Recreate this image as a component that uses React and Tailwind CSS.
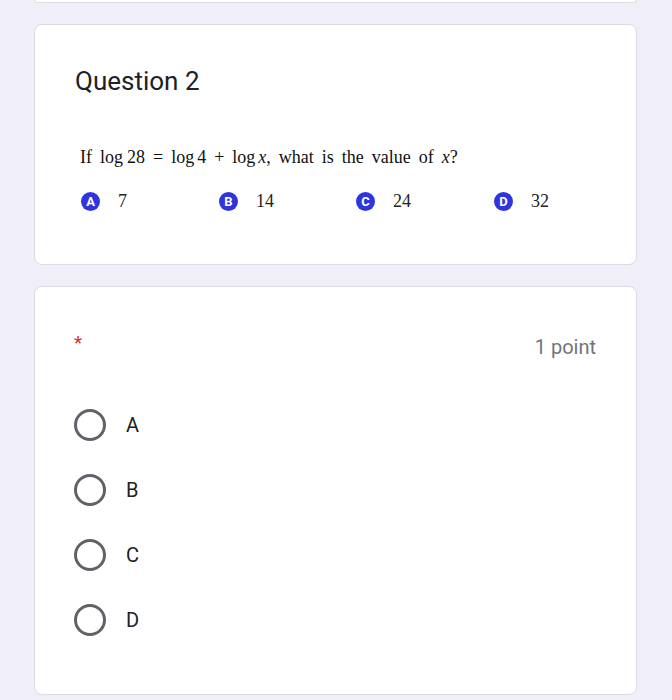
import { Fragment } from 'react';

const OPTIONS = [
  { letter: 'A', value: '7' },
  { letter: 'B', value: '14' },
  { letter: 'C', value: '24' },
  { letter: 'D', value: '32' },
];

const Badge = ({ letter }) => (
  <span className="flex h-[19px] w-[19px] items-center justify-center rounded-full bg-[#2f35de] text-[13px] font-bold leading-none text-white [font-family:Roboto,sans-serif]">
    {letter}
  </span>
);

const Radio = ({ label }) => (
  <div className="flex items-center gap-5">
    <span className="h-8 w-8 rounded-full border-[3px] border-[#5f6368]" />
    <span className="text-[20px] text-[#202124]">{label}</span>
  </div>
);

export default function App() {
  return (
    <div className="min-h-[700px] bg-[#f0eef9] pb-6 [font-family:Roboto,'Liberation_Sans',sans-serif]">
      {/* end of the previous card */}
      <div className="mx-[34px] mr-[35px] h-[3px] rounded-b-lg border-x border-b border-[#dadce0] bg-white" />

      {/* Question card */}
      <div className="mx-[34px] mr-[35px] mt-[21px] rounded-lg border border-[#dadce0] bg-white pb-[53px] pl-10 pt-[40px]">
        <h2 className="text-[26px] leading-8 text-[#202124]">Question 2</h2>

        <p className="ml-[5px] mt-[48px] text-[18px] leading-6 text-[#111] [font-family:'Liberation_Serif',serif] [word-spacing:3.5px]">
          If log<span className="ml-[4px]">28</span> = log<span className="ml-[3px]">4</span> + log<span className="ml-[3px] italic">x</span>, what is the value of <span className="italic">x</span>?
        </p>

        <div className="ml-[6px] mt-[22px] grid grid-cols-[138px_137px_138px_100px]">
          {OPTIONS.map((o) => (
            <div key={o.letter} className="flex h-5 items-center gap-[18px]">
              <Badge letter={o.letter} />
              <span className="text-[18px] text-[#222] [font-family:'Liberation_Serif',serif]">{o.value}</span>
            </div>
          ))}
        </div>
      </div>

      {/* Answer card */}
      <div className="mx-[34px] mr-[35px] mt-[21px] rounded-lg border border-[#dadce0] bg-white pb-[58px] pl-[39px] pr-10 pt-[46px]">
        <div className="flex items-start justify-between">
          <span className="-mt-[4px] text-[19px] leading-7 text-[#d93025]">*</span>
          <span className="text-[20px] leading-7 text-[#70757a]">1 point</span>
        </div>

        <div className="mt-[48px] flex flex-col gap-[33px]">
          {OPTIONS.map((o) => (
            <Fragment key={o.letter}>
              <Radio label={o.letter} />
            </Fragment>
          ))}
        </div>
      </div>
    </div>
  );
}
